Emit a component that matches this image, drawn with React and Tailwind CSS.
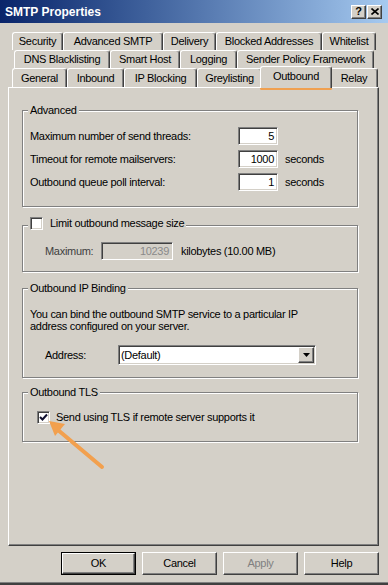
import React from 'react';

const raised = 'border border-t-white border-l-white border-b-[#404040] border-r-[#404040] shadow-[inset_-1px_-1px_0_#808080]';
const sunken = 'border border-t-[#808080] border-l-[#808080] border-b-white border-r-white shadow-[inset_1px_1px_0_#404040,inset_-1px_-1px_0_#d4d0c8]';

const rows = [
  { ml: 'ml-[12px]', tabs: [['Security', 51], ['Advanced SMTP', 100], ['Delivery', 53], ['Blocked Addresses', 106], ['Whitelist', 54]] },
  { ml: 'ml-[14px]', tabs: [['DNS Blacklisting', 96], ['Smart Host', 70], ['Logging', 57], ['Sender Policy Framework', 137]] },
];
const lastRow = [['General', 55], ['Inbound', 57], ['IP Blocking', 73], ['Greylisting', 65], ['Outbound', 68], ['Relay', 48]];

const Tab = ({ label, w, selected }) => (
  <div
    style={{ width: selected ? w + 4 : w }}
    className={`flex items-center justify-center rounded-t-[3px] border-l border-t border-r border-l-white border-t-white border-r-[#404040] shadow-[inset_-1px_0_0_#808080] bg-[#d4d0c8] ${
      selected ? 'relative z-10 h-[22px] -mx-[2px] -mb-[1px] pb-[3px]' : 'h-full'
    }`}
  >
    {label}
  </div>
);

const Checkbox = ({ checked }) => (
  <div className={`w-[13px] h-[13px] bg-white flex items-center justify-center shrink-0 ${sunken}`}>
    {checked && (
      <svg width="9" height="9" viewBox="0 0 9 9">
        <path d="M1 4 L3.5 6.5 L8 1.5" fill="none" stroke="#101030" strokeWidth="2" />
      </svg>
    )}
  </div>
);

const Group = ({ legend, className = '', children }) => (
  <fieldset className={`ml-[13px] w-[336px] border border-[#808080] shadow-[inset_1px_1px_0_#fff,1px_1px_0_#fff] ${className}`}>
    <legend className="ml-[5px] px-[2px] bg-[#d4d0c8] leading-[13px]">{legend}</legend>
    {children}
  </fieldset>
);

const Field = ({ value, className = '' }) => (
  <div className={`h-[18px] bg-white flex items-center justify-end pr-[3px] ${sunken} ${className}`}>{value}</div>
);

const Button = ({ label, isDefault, disabled }) => (
  <div className={`w-[75px] h-[23px] ${isDefault ? 'border border-black' : ''}`}>
    <div className={`w-full h-full flex items-center justify-center ${raised} ${disabled ? 'text-[#808080]' : ''}`}>{label}</div>
  </div>
);

export default function App() {
  return (
    <div className="relative w-[388px] h-[585px] bg-[#d4d0c8] flex flex-col text-[11px] tracking-[-0.3px] text-black font-['Liberation_Sans',Arial,sans-serif] overflow-hidden">
      {/* Title bar */}
      <div className="h-[23px] shrink-0 flex items-center pl-[5px] pr-[6px] bg-linear-to-r from-[#0a246a] to-[#a6caf0]">
        <span className="flex-1 text-white font-bold text-[12px] tracking-normal">SMTP Properties</span>
        <div className="flex gap-[1px]">
          <div className={`w-[15px] h-[14px] bg-[#d4d0c8] flex items-center justify-center font-bold text-[11px] leading-none ${raised}`}>?</div>
          <div className={`w-[15px] h-[14px] bg-[#d4d0c8] flex items-center justify-center ${raised}`}>
            <svg width="8" height="7" viewBox="0 0 8 7">
              <path d="M0.5 0.5 L7.5 6.5 M7.5 0.5 L0.5 6.5" stroke="#000" strokeWidth="1.6" />
            </svg>
          </div>
        </div>
      </div>

      {/* Tabs */}
      <div className="mt-[9px]">
        {rows.map((r, i) => (
          <div key={i} className={`flex h-[18px] ${r.ml}`}>
            {r.tabs.map(([l, w]) => <Tab key={l} label={l} w={w} />)}
          </div>
        ))}
        <div className="flex items-end h-[19px] ml-[12px] relative z-10">
          {lastRow.map(([l, w]) => <Tab key={l} label={l} w={w} selected={l === 'Outbound'} />)}
        </div>
      </div>

      {/* Panel */}
      <div className="relative ml-[8px] w-[371px] h-[459px] border border-t-white border-l-white border-b-[#404040] border-r-[#404040] shadow-[inset_-1px_-1px_0_#808080]">
        <Group legend="Advanced" className="mt-[16px]">
          <div className="pt-[10px] pb-[15px] pl-[7px] flex flex-col gap-[5px]">
            {[
              ['Maximum number of send threads:', '5', false],
              ['Timeout for remote mailservers:', '1000', true],
              ['Outbound queue poll interval:', '1', true],
            ].map(([l, v, s]) => (
              <div key={l} className="flex items-center h-[18px]">
                <span className="w-[208px]">{l}</span>
                <Field value={v} className="w-[40px]" />
                {s && <span className="ml-[7px]">seconds</span>}
              </div>
            ))}
          </div>
        </Group>

        <Group
          className="mt-[10px]"
          legend={
            <span className="inline-flex items-center">
              <Checkbox />
              <span className="ml-[7px]">Limit outbound message size</span>
            </span>
          }
        >
          <div className="pt-[9px] pb-[11px] pl-[22px] flex items-center">
            <span className="w-[56px] text-[#404040]">Maximum:</span>
            <Field value="10239" className="w-[72px] !bg-[#d4d0c8] text-[#8a8a8a]" />
            <span className="ml-[8px]">kilobytes (10.00 MB)</span>
          </div>
        </Group>

        <Group legend="Outbound IP Binding" className="mt-[10px]">
          <div className="pt-[13px] pb-[12px] pl-[7px]">
            <p className="leading-[12px]">
              You can bind the outbound SMTP service to a particular IP
              <br />
              address configured on your server.
            </p>
            <div className="mt-[13px] pl-[15px] flex items-center">
              <span className="w-[73px]">Address:</span>
              <div className={`w-[198px] h-[20px] bg-white flex items-center pl-[2px] pr-[1px] ${sunken}`}>
                <span className="flex-1">(Default)</span>
                <div className={`w-[16px] h-[16px] bg-[#d4d0c8] flex items-center justify-center ${raised}`}>
                  <svg width="7" height="4" viewBox="0 0 7 4">
                    <path d="M0 0 H7 L3.5 4 Z" fill="#000" />
                  </svg>
                </div>
              </div>
            </div>
          </div>
        </Group>

        <Group legend="Outbound TLS" className="mt-[8px]">
          <div className="pt-[12px] pb-[17px] pl-[14px] flex items-center h-[42px]">
            <Checkbox checked />
            <span className="ml-[6px]">Send using TLS if remote server supports it</span>
          </div>
        </Group>
      </div>

      {/* Buttons */}
      <div className="mt-[6px] flex justify-end gap-[6px] pr-[9px]">
        <Button label="OK" isDefault />
        <Button label="Cancel" />
        <Button label="Apply" disabled />
        <Button label="Help" />
      </div>

      <div className="flex-1" />
      <div className="h-[1px] bg-[#808080]" />
      <div className="h-[2px] bg-[#404040]" />

      {/* Annotations */}
      <div className="absolute left-[260px] top-[87px] w-[72px] h-[3px] rounded-full bg-[#f0a050]" />
      <svg className="absolute left-0 top-0 pointer-events-none" width="388" height="585">
        <line x1="102" y1="467" x2="58" y2="430" stroke="#f2a04e" strokeWidth="4" strokeLinecap="round" />
        <polygon points="49,421 65,424 55,436" fill="#f2a04e" />
      </svg>
    </div>
  );
}
